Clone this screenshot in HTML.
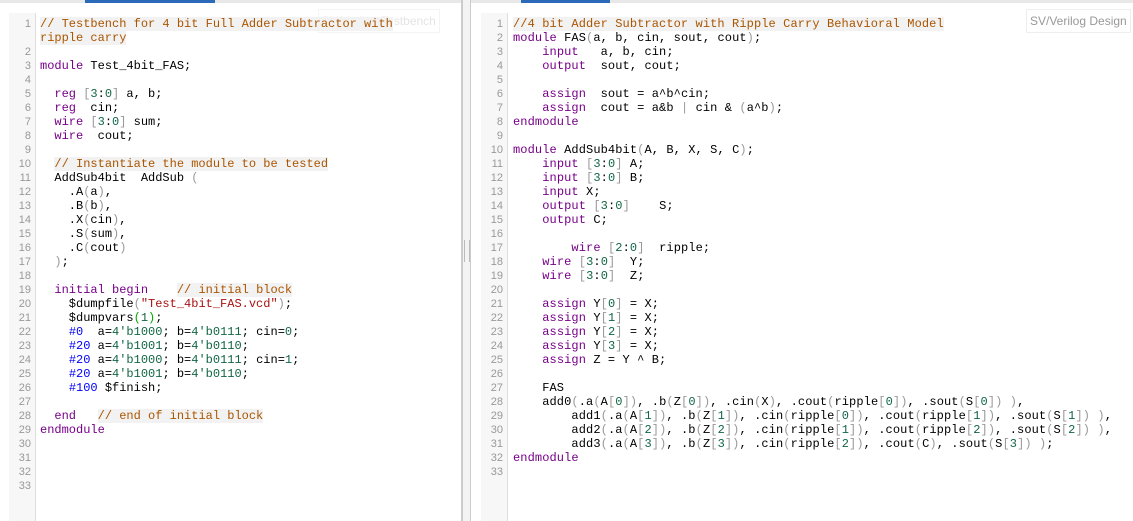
<!DOCTYPE html>
<html><head><meta charset="utf-8"><style>
body{margin:0;width:1133px;height:521px;background:#fff;position:relative;overflow:hidden;font-family:"Liberation Mono",monospace;}
.top{position:absolute;top:0;left:0;width:1133px;height:3px;background:#e8e8e8}
.tab{position:absolute;top:0;height:3px;background:#2a6ab8}
.pane{position:absolute;top:0;height:521px;background:#fff}
.gut{position:absolute;top:13px;bottom:0;background:#f7f7f7;border-right:1px solid #ddd}
.code{position:absolute;top:17px;font-size:12px;line-height:14px;white-space:pre;color:#000}
.ln{position:absolute;top:17px;font-family:"Liberation Sans",sans-serif;font-size:11px;line-height:14px;color:#999;text-align:right;white-space:pre}
.k{color:#708}.c{color:#a50;background:#f2f2f2}.n{color:#164}.b{color:#999}.s{color:#a11}.d{color:#00f}.g{color:#0a0}
.lab{position:absolute;font-family:"Liberation Sans",sans-serif;font-size:12px;color:#999;border:1px solid #eee;padding:4px 3px;background:#fff}
</style></head><body>
<div class="top"></div>
<div class="tab" style="left:85px;width:130px"></div>
<div class="tab" style="left:521px;width:89px"></div>
<div style="position:absolute;left:461px;top:0;width:2px;height:521px;background:#ccc"></div>
<div style="position:absolute;left:463px;top:0;width:7px;height:521px;background:#f3f3f3"></div>
<div style="position:absolute;left:464px;top:240px;width:4px;height:22px;border-left:1px solid #bbb;border-right:1px solid #bbb"></div>
<div style="position:absolute;left:470px;top:0;width:1px;height:521px;background:#ccc"></div>

<div class="gut" style="left:9px;width:26px"></div>
<div class="lab" style="left:318px;top:9px;color:#e4e4e4;border-color:#f4f4f4">SV/Verilog Testbench</div>
<div class="ln" style="left:9px;width:22px">1

2
3
4
5
6
7
8
9
10
11
12
13
14
15
16
17
18
19
20
21
22
23
24
25
26
27
28
29
30
31
32
33</div>
<div class="code" style="left:40px"><span class="c">// Testbench for 4 bit Full Adder Subtractor with</span>
<span class="c">ripple carry</span>

<span class="k">module</span> Test_4bit_FAS;

  <span class="k">reg</span> <span class="b">[</span><span class="n">3</span>:<span class="n">0</span><span class="b">]</span> a, b;
  <span class="k">reg</span>  cin;
  <span class="k">wire</span> <span class="b">[</span><span class="n">3</span>:<span class="n">0</span><span class="b">]</span> sum;
  <span class="k">wire</span>  cout;

  <span class="c">// Instantiate the module to be tested</span>
  AddSub4bit  AddSub <span class="b">(</span>
    .A<span class="b">(</span>a<span class="b">)</span>,
    .B<span class="b">(</span>b<span class="b">)</span>,
    .X<span class="b">(</span>cin<span class="b">)</span>,
    .S<span class="b">(</span>sum<span class="b">)</span>,
    .C<span class="b">(</span>cout<span class="b">)</span>
  <span class="b">)</span>;

  <span class="k">initial</span> <span class="k">begin</span>    <span class="c">// initial block</span>
    $dumpfile<span class="b">(</span><span class="s">"Test_4bit_FAS.vcd"</span><span class="b">)</span>;
    $dumpvars<span class="g">(</span><span class="n">1</span><span class="g">)</span>;
    <span class="d">#0</span>  a=<span class="n">4'b1000</span>; b=<span class="n">4'b0111</span>; cin=<span class="n">0</span>;
    <span class="d">#20</span> a=<span class="n">4'b1001</span>; b=<span class="n">4'b0110</span>;
    <span class="d">#20</span> a=<span class="n">4'b1000</span>; b=<span class="n">4'b0111</span>; cin=<span class="n">1</span>;
    <span class="d">#20</span> a=<span class="n">4'b1001</span>; b=<span class="n">4'b0110</span>;
    <span class="d">#100</span> $finish;

  <span class="k">end</span>   <span class="c">// end of initial block</span>
<span class="k">endmodule</span></div>

<div class="gut" style="left:481px;width:26px"></div>
<div class="lab" style="left:1026px;top:9px">SV/Verilog Design</div>
<div class="ln" style="left:481px;width:22px">1
2
3
4
5
6
7
8
9
10
11
12
13
14
15
16
17
18
19
20
21
22
23
24
25
26
27
28
29
30
31
32
33</div>
<div class="code" style="left:513px;letter-spacing:0.1px"><span class="c">//4 bit Adder Subtractor with Ripple Carry Behavioral Model</span>
<span class="k">module</span> FAS<span class="b">(</span>a, b, cin, sout, cout<span class="b">)</span>;
    <span class="k">input</span>   a, b, cin;
    <span class="k">output</span>  sout, cout;

    <span class="k">assign</span>  sout = a^b^cin;
    <span class="k">assign</span>  cout = a&amp;b <span class="b">|</span> cin &amp; <span class="b">(</span>a^b<span class="b">)</span>;
<span class="k">endmodule</span>

<span class="k">module</span> AddSub4bit<span class="b">(</span>A, B, X, S, C<span class="b">)</span>;
    <span class="k">input</span> <span class="b">[</span><span class="n">3</span>:<span class="n">0</span><span class="b">]</span> A;
    <span class="k">input</span> <span class="b">[</span><span class="n">3</span>:<span class="n">0</span><span class="b">]</span> B;
    <span class="k">input</span> X;
    <span class="k">output</span> <span class="b">[</span><span class="n">3</span>:<span class="n">0</span><span class="b">]</span>    S;
    <span class="k">output</span> C;

        <span class="k">wire</span> <span class="b">[</span><span class="n">2</span>:<span class="n">0</span><span class="b">]</span>  ripple;
    <span class="k">wire</span> <span class="b">[</span><span class="n">3</span>:<span class="n">0</span><span class="b">]</span>  Y;
    <span class="k">wire</span> <span class="b">[</span><span class="n">3</span>:<span class="n">0</span><span class="b">]</span>  Z;

    <span class="k">assign</span> Y<span class="b">[</span><span class="n">0</span><span class="b">]</span> = X;
    <span class="k">assign</span> Y<span class="b">[</span><span class="n">1</span><span class="b">]</span> = X;
    <span class="k">assign</span> Y<span class="b">[</span><span class="n">2</span><span class="b">]</span> = X;
    <span class="k">assign</span> Y<span class="b">[</span><span class="n">3</span><span class="b">]</span> = X;
    <span class="k">assign</span> Z = Y ^ B;

    FAS
    add0<span class="b">(</span>.a<span class="b">(</span>A<span class="b">[</span><span class="n">0</span><span class="b">])</span>, .b<span class="b">(</span>Z<span class="b">[</span><span class="n">0</span><span class="b">])</span>, .cin<span class="b">(</span>X<span class="b">)</span>, .cout<span class="b">(</span>ripple<span class="b">[</span><span class="n">0</span><span class="b">])</span>, .sout<span class="b">(</span>S<span class="b">[</span><span class="n">0</span><span class="b">])</span> <span class="b">)</span>,
        add1<span class="b">(</span>.a<span class="b">(</span>A<span class="b">[</span><span class="n">1</span><span class="b">])</span>, .b<span class="b">(</span>Z<span class="b">[</span><span class="n">1</span><span class="b">])</span>, .cin<span class="b">(</span>ripple<span class="b">[</span><span class="n">0</span><span class="b">])</span>, .cout<span class="b">(</span>ripple<span class="b">[</span><span class="n">1</span><span class="b">])</span>, .sout<span class="b">(</span>S<span class="b">[</span><span class="n">1</span><span class="b">])</span> <span class="b">)</span>,
        add2<span class="b">(</span>.a<span class="b">(</span>A<span class="b">[</span><span class="n">2</span><span class="b">])</span>, .b<span class="b">(</span>Z<span class="b">[</span><span class="n">2</span><span class="b">])</span>, .cin<span class="b">(</span>ripple<span class="b">[</span><span class="n">1</span><span class="b">])</span>, .cout<span class="b">(</span>ripple<span class="b">[</span><span class="n">2</span><span class="b">])</span>, .sout<span class="b">(</span>S<span class="b">[</span><span class="n">2</span><span class="b">])</span> <span class="b">)</span>,
        add3<span class="b">(</span>.a<span class="b">(</span>A<span class="b">[</span><span class="n">3</span><span class="b">])</span>, .b<span class="b">(</span>Z<span class="b">[</span><span class="n">3</span><span class="b">])</span>, .cin<span class="b">(</span>ripple<span class="b">[</span><span class="n">2</span><span class="b">])</span>, .cout<span class="b">(</span>C<span class="b">)</span>, .sout<span class="b">(</span>S<span class="b">[</span><span class="n">3</span><span class="b">])</span> <span class="b">)</span>;
<span class="k">endmodule</span></div>
</body></html>
